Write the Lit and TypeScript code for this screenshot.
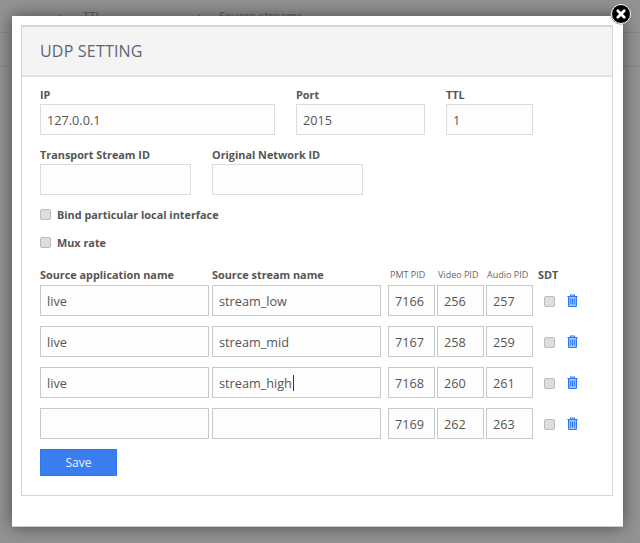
import { LitElement, html, css, svg } from "lit";
import { customElement } from "lit/decorators.js";

const rows = [
  { app: "live", stream: "stream_low", pmt: "7166", video: "256", audio: "257", caret: false },
  { app: "live", stream: "stream_mid", pmt: "7167", video: "258", audio: "259", caret: false },
  { app: "live", stream: "stream_high", pmt: "7168", video: "260", audio: "261", caret: true },
  { app: "", stream: "", pmt: "7169", video: "262", audio: "263", caret: false },
];

const trash = svg`<svg class="trash" viewBox="0 0 11 13" width="11" height="13" aria-hidden="true">
  <path d="M3.6 2V1h3.8v1M.4 2.5h10.2" fill="none" stroke="#2a78f2" stroke-width="1.2"/>
  <path d="M1.6 3v8.6c0 .5.4.9.9.9h6c.5 0 .9-.4.9-.9V3" fill="#a9c9f8" stroke="#2a78f2" stroke-width="1.2"/>
  <path d="M3.7 4.5v6M5.5 4.5v6M7.3 4.5v6" stroke="#2a78f2" stroke-width="1"/>
</svg>`;

@customElement("app-root")
export class AppRoot extends LitElement {
  static styles = css`
    :host {
      display: block;
      position: relative;
      width: 640px;
      height: 543px;
      overflow: hidden;
      background: #939393;
      font-family: "Open Sans", "Liberation Sans", sans-serif;
      color: #555;
    }
    .page-head {
      display: flex;
      height: 33px;
      box-sizing: border-box;
      border-bottom: 1px solid #888;
      padding: 7px 0 0 57px;
      font-size: 11.2px;
      font-weight: 600;
      line-height: 18px;
      color: #666;
    }
    .page-head .ttl { margin-left: 19px; width: 113px; }
    .page-head .src { margin-left: 16px; }
    .page-head .arrow { font-size: 7px; }
    .page-row { height: 34px; box-sizing: border-box; border-bottom: 1px solid #888; }
    .modal {
      position: absolute;
      left: 12px;
      top: 16px;
      width: 611px;
      height: 511px;
      box-sizing: border-box;
      padding: 9px 10px 0 9px;
      background: #fff;
      border-bottom: 1px solid #ccc;
      box-shadow: 0 0 16px rgba(0, 0, 0, 0.5);
    }
    .panel {
      height: 471px;
      box-sizing: border-box;
      border: 1px solid #d6d6d6;
      border-top-width: 2px;
    }
    .panel-head {
      height: 50px;
      box-sizing: border-box;
      background: #f4f4f4;
      border-bottom: 2px solid #e2e2e2;
      padding: 0 18px;
      font-size: 16px;
      line-height: 48px;
      color: #5d6670;
      letter-spacing: 0.2px;
    }
    .panel-body {
      display: flex;
      flex-direction: column;
      padding: 9px 0 0 18px;
    }
    .line { display: flex; gap: 21px; }
    .line.second { margin-top: 11px; }
    .field { display: flex; flex-direction: column; gap: 1px; }
    label, .col {
      font-size: 10.85px;
      font-weight: 700;
      line-height: 17px;
      color: #555;
      white-space: nowrap;
    }
    input[type="text"] {
      display: block;
      width: 100%;
      height: 31px;
      box-sizing: border-box;
      border: 1px solid #c9c9c9;
      border-radius: 0;
      outline: none;
      padding: 0 6px;
      margin: 0;
      background: #fdfdfd;
      font: 400 12.7px "Open Sans", "Liberation Sans", sans-serif;
      color: #555;
    }
    .field input[type="text"] { border-color: #dcdcdc; }
    .w235 { width: 235px; }
    .w129 { width: 129px; }
    .w87 { width: 87px; }
    .w151 { width: 151px; }
    .check {
      display: flex;
      align-items: center;
      gap: 6px;
      height: 17px;
      font-size: 10.85px;
      font-weight: 700;
      color: #555;
      margin-top: 11px;
    }
    .box {
      width: 11px;
      height: 11px;
      box-sizing: border-box;
      border: 1px solid #bcbcbc;
      border-radius: 2px;
      background: #dedede;
      flex: none;
    }
    .cols {
      display: flex;
      height: 17px;
      margin-top: 15px;
      margin-bottom: 2px;
    }
    .row { display: flex; align-items: center; margin-bottom: 10px; }
    .c-app { width: 169px; flex: none; }
    .c-stream { width: 169px; margin-left: 3px; flex: none; }
    .c-pmt { width: 47px; margin-left: 7px; flex: none; }
    .c-video { width: 47px; margin-left: 2px; flex: none; }
    .c-audio { width: 47px; margin-left: 2px; flex: none; }
    .c-sdt { margin: 2px 0 0 11px; flex: none; }
    .c-trash { margin: 1px 0 0 12px; flex: none; display: block; }
    .pid {
      font-size: 9px;
      font-weight: 400;
      color: #666;
      line-height: 17px;
      white-space: nowrap;
      padding-left: 2px;
      box-sizing: border-box;
    }
    .c-video.pid { padding-left: 1px; }
    .c-audio.pid { padding-left: 1px; }
    .sdt { font-size: 10.85px; font-weight: 700; color: #555; line-height: 17px; margin-left: 5px; }
    .wrap { position: relative; display: block; }
    .caret {
      position: absolute;
      left: 81px;
      top: 8px;
      width: 1px;
      height: 16px;
      background: #333;
    }
    .save {
      display: block;
      width: 77px;
      height: 27px;
      padding: 0;
      border: 1px solid #2a78f2;
      border-radius: 0;
      background: #3a7dee;
      color: #e9f1ff;
      font: 400 12px "Open Sans", "Liberation Sans", sans-serif;
    }
    .close {
      position: absolute;
      left: 610px;
      top: 3px;
      width: 22px;
      height: 22px;
      display: block;
    }
  `;

  render() {
    return html`
      <div class="page-head">
        <span class="arrow">▲</span><span class="ttl">TTL</span>
        <span class="arrow">▲</span><span class="src">Source streams</span>
      </div>
      <div class="page-row"></div>
      <div class="modal">
        <div class="panel">
          <div class="panel-head">UDP SETTING</div>
          <div class="panel-body">
            <div class="line">
              <div class="field w235"><label>IP</label><input type="text" .value=${"127.0.0.1"} /></div>
              <div class="field w129"><label>Port</label><input type="text" .value=${"2015"} /></div>
              <div class="field w87"><label>TTL</label><input type="text" .value=${"1"} /></div>
            </div>
            <div class="line second">
              <div class="field w151"><label>Transport Stream ID</label><input type="text" /></div>
              <div class="field w151"><label>Original Network ID</label><input type="text" /></div>
            </div>
            <div class="check"><span class="box"></span>Bind particular local interface</div>
            <div class="check"><span class="box"></span>Mux rate</div>
            <div class="cols">
              <div class="col c-app">Source application name</div>
              <div class="col c-stream">Source stream name</div>
              <div class="pid c-pmt">PMT PID</div>
              <div class="pid c-video">Video PID</div>
              <div class="pid c-audio">Audio PID</div>
              <div class="sdt">SDT</div>
            </div>
            ${rows.map(
              (r) => html`
                <div class="row">
                  <div class="c-app"><input type="text" .value=${r.app} /></div>
                  <div class="c-stream wrap">
                    <input type="text" .value=${r.stream} />
                    ${r.caret ? html`<span class="caret"></span>` : null}
                  </div>
                  <div class="c-pmt"><input type="text" .value=${r.pmt} /></div>
                  <div class="c-video"><input type="text" .value=${r.video} /></div>
                  <div class="c-audio"><input type="text" .value=${r.audio} /></div>
                  <span class="box c-sdt"></span>
                  <span class="c-trash">${trash}</span>
                </div>
              `
            )}
            <button class="save">Save</button>
          </div>
        </div>
      </div>
      <svg class="close" viewBox="0 0 22 22" aria-hidden="true">
        <circle cx="11" cy="11" r="10.5" fill="#888"/>
        <circle cx="11" cy="11" r="9.5" fill="#000" stroke="#fff" stroke-width="1"/>
        <path d="M7.8 7.8l6.4 6.4M14.2 7.8l-6.4 6.4" stroke="#fff" stroke-width="2.8" stroke-linecap="round"/>
      </svg>
    `;
  }
}
